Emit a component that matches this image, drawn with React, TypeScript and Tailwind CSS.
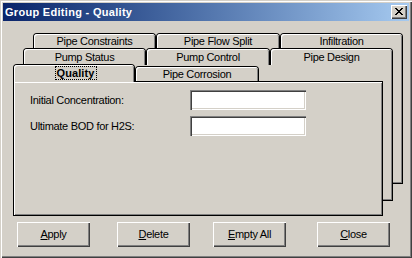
import React from "react";

function CloseGlyph() {
  return (
    <svg width="8" height="7" viewBox="0 0 8 7" shapeRendering="crispEdges">
      <g fill="#000">
        <rect x="0" y="0" width="2" height="1" />
        <rect x="6" y="0" width="2" height="1" />
        <rect x="1" y="1" width="2" height="1" />
        <rect x="5" y="1" width="2" height="1" />
        <rect x="2" y="2" width="4" height="1" />
        <rect x="3" y="3" width="2" height="1" />
        <rect x="2" y="4" width="4" height="1" />
        <rect x="1" y="5" width="2" height="1" />
        <rect x="5" y="5" width="2" height="1" />
        <rect x="0" y="6" width="2" height="1" />
        <rect x="6" y="6" width="2" height="1" />
      </g>
    </svg>
  );
}

function Tab({ label, className }: { label: string; className: string }) {
  return (
    <div className={`bg-[#d4d0c8] border border-b-0 border-black rounded-t-[4px] ${className}`}>
      <div className="h-full rounded-t-[3px] shadow-[inset_1px_1px_0_#ffffff,inset_-1px_0_0_#808080] flex items-center justify-center tracking-[-0.3px] leading-none">
        {label}
      </div>
    </div>
  );
}

function Field({ label }: { label: string }) {
  return (
    <div className="flex items-center h-[20px]">
      <div className="w-[160px] tracking-[-0.3px] leading-none">{label}</div>
      <div className="w-[116px] h-[20px] bg-white shadow-[inset_1px_1px_0_#808080,inset_2px_2px_0_#404040,inset_-1px_-1px_0_#ffffff,inset_-2px_-2px_0_#d4d0c8]" />
    </div>
  );
}

function Btn({ children, className }: { children: React.ReactNode; className: string }) {
  return (
    <div
      className={`w-[73px] h-[25px] flex items-center justify-center bg-[#d4d0c8] shadow-[inset_1px_1px_0_#ffffff,inset_-1px_-1px_0_#404040,inset_-2px_-2px_0_#808080] tracking-[-0.3px] leading-none ${className}`}
    >
      <span>{children}</span>
    </div>
  );
}

export default function App() {
  return (
    <div className="w-[412px] h-[258px] bg-[#d4d0c8] flex flex-col shadow-[inset_1px_1px_0_#d4d0c8,inset_2px_2px_0_#ffffff,inset_-1px_-1px_0_#404040,inset_-2px_-2px_0_#808080] font-['Liberation_Sans',Arial,sans-serif] text-[11px] text-black select-none">
      {/* Title bar */}
      <div className="mx-[3px] mt-[3px] h-[18px] bg-linear-to-r from-[#0a246a] to-[#a6caf0] flex items-center justify-between pl-[2px] pr-[2px]">
        <span className="text-white font-bold tracking-[0.3px] leading-none">Group Editing - Quality</span>
        <div className="w-[16px] h-[14px] bg-[#d4d0c8] shadow-[inset_1px_1px_0_#ffffff,inset_-1px_-1px_0_#404040,inset_-2px_-2px_0_#808080] flex items-center justify-center pb-[1px]">
          <CloseGlyph />
        </div>
      </div>

      {/* Tab stack */}
      <div className="grid">
        {/* Layer 1 (back row) */}
        <div className="[grid-area:1/1] ml-[33px] mt-[12px] w-[370px] h-[151px] flex flex-col">
          <div className="flex h-[16px]">
            <Tab label="Pipe Constraints" className="w-[123px] h-[16px]" />
            <Tab label="Pipe Flow Split" className="w-[124px] h-[16px]" />
            <Tab label="Infiltration" className="w-[123px] h-[16px]" />
          </div>
          <div className="flex-1 bg-[#d4d0c8] border-x border-b border-black shadow-[inset_-1px_-1px_0_#808080]" />
        </div>

        {/* Layer 2 */}
        <div className="[grid-area:1/1] ml-[23px] mt-[27px] w-[370px] h-[153px] flex flex-col">
          <div className="flex h-[17px]">
            <Tab label="Pump Status" className="w-[123px] h-[17px]" />
            <Tab label="Pump Control" className="w-[124px] h-[17px]" />
            <Tab label="Pipe Design" className="w-[123px] h-[17px]" />
          </div>
          <div className="flex-1 bg-[#d4d0c8] border-x border-b border-black shadow-[inset_-1px_-1px_0_#808080]" />
        </div>

        {/* Layer 3 (front row) */}
        <div className="[grid-area:1/1] ml-[13px] mt-[43px] w-[370px] h-[152px] flex flex-col">
          <div className="flex items-start h-[17px]">
            <div className="relative z-10 w-[122px] h-[18px] bg-[#d4d0c8] border border-b-0 border-black rounded-t-[4px]">
              <div className="h-full rounded-t-[3px] shadow-[inset_1px_1px_0_#ffffff,inset_-1px_0_0_#808080] flex items-center justify-center pl-[3px] pb-[1px]">
                <span className="font-bold tracking-[0.1px] leading-none border border-dotted border-black px-[1px] pt-[1px]">Quality</span>
              </div>
            </div>
            <Tab label="Pipe Corrosion" className="mt-[2px] w-[124px] h-[15px]" />
          </div>
          <div className="flex-1 bg-[#d4d0c8] border border-black shadow-[inset_1px_1px_0_#ffffff,inset_-1px_-1px_0_#808080] pl-[16px] pt-[8px] flex flex-col gap-[6px]">
            <Field label="Initial Concentration:" />
            <Field label="Ultimate BOD for H2S:" />
          </div>
        </div>
      </div>

      {/* Buttons */}
      <div className="flex mt-[6px]">
        <Btn className="ml-[17px]">
          <span className="underline">A</span>pply
        </Btn>
        <Btn className="ml-[27px]">
          <span className="underline">D</span>elete
        </Btn>
        <Btn className="ml-[23px]">
          <span className="underline">E</span>mpty All
        </Btn>
        <Btn className="ml-[31px]">
          <span className="underline">C</span>lose
        </Btn>
      </div>
    </div>
  );
}
